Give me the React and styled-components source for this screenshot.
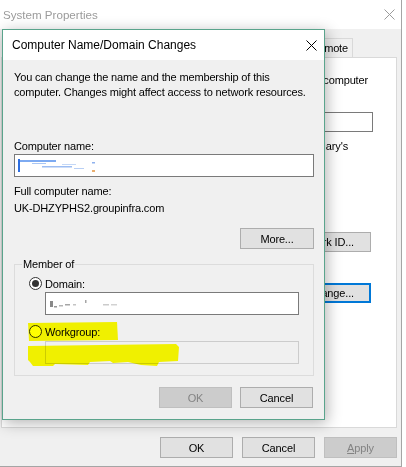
import React from 'react';
import styled, { createGlobalStyle, css } from 'styled-components';

const GlobalStyle = createGlobalStyle`
  html, body {
    margin: 0;
    background: #ffffff;
  }
  body {
    font-family: "Liberation Sans", Arial, sans-serif;
    font-size: 11px;
    letter-spacing: -0.15px;
    color: #000;
  }
  * { box-sizing: border-box; }
`;

const Desktop = styled.div`
  position: relative;
  width: 406px;
  height: 467px;
  overflow: hidden;
  background: #ffffff;
`;

/* ---------- System Properties (inactive, behind) ---------- */

const OuterWindow = styled.div`
  width: 402px;
  height: 467px;
  display: flex;
  flex-direction: column;
  background: #f0f0f0;
  border-right: 1px solid #a5a5a5;
  border-bottom: 1px solid #a5a5a5;
`;

const OuterTitleBar = styled.div`
  height: 29px;
  flex: none;
  display: flex;
  align-items: center;
  justify-content: space-between;
  padding: 0 6px 0 3px;
  background: #ffffff;
  color: #9b9b9b;
  font-size: 11.6px;
  letter-spacing: 0;
`;

const TabStrip = styled.div`
  height: 19px;
  margin-top: 9px;
  flex: none;
  display: flex;
  justify-content: flex-end;
  padding-right: 48px;
`;

const Tab = styled.div`
  height: 19px;
  display: flex;
  align-items: center;
  padding: 0 4px 0 8px;
  background: #f0f0f0;
  border: 1px solid #d9d9d9;
  border-bottom: none;
`;

const TabPanel = styled.div`
  height: 371px;
  flex: none;
  margin: 0 4px 0 1px;
  background: #ffffff;
  border: 1px solid #d9d9d9;
  display: flex;
  flex-direction: column;
  align-items: flex-end;
`;

const PanelText = styled.div`
  line-height: 15px;
  white-space: nowrap;
  margin-top: ${({ $top }) => $top}px;
  margin-right: ${({ $inset }) => $inset}px;
`;

const PanelInput = styled.div`
  width: 220px;
  height: 20px;
  margin-top: 24px;
  margin-right: 23px;
  background: #fff;
  border: 1px solid #7a7a7a;
`;

const WinButton = styled.button`
  width: ${({ $w }) => $w || 73}px;
  height: ${({ $h }) => $h || 21}px;
  padding: 0;
  font: inherit;
  letter-spacing: inherit;
  color: #000;
  background: #e1e1e1;
  border: 1px solid #adadad;
  flex: none;
  ${({ disabled }) =>
    disabled &&
    css`
      background: #cccccc;
      border-color: #bfbfbf;
      color: #838383;
    `}
  ${({ $focus }) =>
    $focus &&
    css`
      border: 2px solid #0078d7;
    `}
`;

const PanelButton = styled(WinButton)`
  margin-top: ${({ $top }) => $top}px;
  margin-right: 25px;
  text-align: right;
  padding-right: ${({ $focus }) => ($focus ? 15 : 16)}px;
`;

const OuterButtons = styled.div`
  margin-top: 9px;
  padding-right: 4px;
  display: flex;
  justify-content: flex-end;
  gap: 9px;
`;

/* ---------- Computer Name/Domain Changes (active dialog) ---------- */

const Dialog = styled.div`
  position: absolute;
  left: 2px;
  top: 29px;
  width: 323px;
  height: 391px;
  display: flex;
  flex-direction: column;
  background: #f0f0f0;
  border: 1px solid #5aa48c;
  box-shadow: 2px 3px 14px rgba(0, 0, 0, 0.3);
`;

const DialogTitleBar = styled.div`
  height: 30px;
  flex: none;
  display: flex;
  align-items: center;
  justify-content: space-between;
  padding: 0 7px 0 9px;
  background: #ffffff;
  font-size: 12px;
  letter-spacing: 0;
`;

const DialogBody = styled.div`
  display: flex;
  flex-direction: column;
  padding: 10px 10px 0 11px;
`;

const Text = styled.div`
  line-height: ${({ $lh }) => $lh || 15}px;
  margin-top: ${({ $top }) => $top || 0}px;
  white-space: nowrap;
`;

const Field = styled.div`
  height: 23px;
  flex: none;
  display: flex;
  align-items: center;
  padding-left: 3px;
  margin-top: ${({ $top }) => $top || 0}px;
  margin-left: ${({ $left }) => $left || 0}px;
  width: ${({ $w }) => $w}px;
  background: ${({ $disabled }) => ($disabled ? '#f0f0f0' : '#ffffff')};
  border: 1px solid ${({ $disabled }) => ($disabled ? '#cccccc' : '#7a7a7a')};
`;

const MoreButton = styled(WinButton)`
  align-self: flex-end;
  margin-top: 11px;
  margin-right: 0;
`;

const GroupBox = styled.fieldset`
  margin: 8px 0 0 0;
  padding: 0 13px 11px 14px;
  min-width: 0;
  border: 1px solid #dcdcdc;
  display: flex;
  flex-direction: column;
`;

const GroupLabel = styled.legend`
  line-height: 14px;
  padding: 0 1px;
  margin-left: -7px;
`;

const RadioRow = styled.label`
  height: 15px;
  display: flex;
  align-items: center;
  gap: 3px;
  margin-top: ${({ $top }) => $top}px;
`;

const Radio = styled.span`
  width: 13px;
  height: 13px;
  border-radius: 50%;
  border: 1px solid #333;
  background: #fff;
  display: flex;
  align-items: center;
  justify-content: center;
  &::after {
    content: '';
    width: 7px;
    height: 7px;
    border-radius: 50%;
    background: ${({ $checked }) => ($checked ? '#333' : 'transparent')};
  }
`;

const DialogButtons = styled.div`
  margin-top: 11px;
  margin-right: 1px;
  display: flex;
  justify-content: flex-end;
  gap: 8px;
`;

const Marker = styled.svg`
  position: absolute;
  left: 0;
  top: 0;
  mix-blend-mode: multiply;
  pointer-events: none;
`;

const CloseIcon = ({ size, color }) => (
  <svg width={size} height={size} viewBox={`0 0 ${size} ${size}`}>
    <path d={`M0.5 0.5 L${size - 0.5} ${size - 0.5} M${size - 0.5} 0.5 L0.5 ${size - 0.5}`} stroke={color} strokeWidth="1" />
  </svg>
);

// smudged-out entries in the two text fields
const NameSmudge = () => (
  <svg width="78" height="14" viewBox="0 0 78 14">
    <defs>
      <filter id="soft"><feGaussianBlur stdDeviation="0.5" /></filter>
    </defs>
    <g filter="url(#soft)">
      <rect x="0" y="0" width="2" height="13" fill="#2d6ee0" />
      <rect x="2" y="1" width="36" height="2" fill="#5d95ee" opacity="0.8" />
      <rect x="14" y="4" width="14" height="1" fill="#a9c6f4" />
      <rect x="24" y="7" width="30" height="1.5" fill="#9dbdf2" />
      <rect x="44" y="5" width="14" height="1" fill="#c4d8f7" />
      <rect x="56" y="9" width="10" height="1" fill="#b8cff5" />
      <rect x="74" y="3" width="3" height="1.5" fill="#8fb2ee" />
      <rect x="74" y="11" width="3" height="2" fill="#e59a4a" opacity="0.8" />
    </g>
  </svg>
);

const DomainSmudge = () => (
  <svg width="72" height="12" viewBox="0 0 72 12">
    <g fill="#6b6b6b">
      <rect x="1" y="3" width="3" height="6" opacity="0.8" />
      <rect x="5" y="8" width="3" height="1.5" opacity="0.7" />
      <rect x="10" y="7" width="4" height="1.5" opacity="0.5" />
      <rect x="16" y="6" width="5" height="1.5" opacity="0.6" />
      <rect x="24" y="6" width="3" height="1.5" opacity="0.4" />
      <rect x="36" y="2" width="1.5" height="3" opacity="0.6" />
      <rect x="54" y="6" width="6" height="1.5" opacity="0.35" />
      <rect x="62" y="6" width="6" height="1.5" opacity="0.3" />
    </g>
  </svg>
);

export default function App() {
  return (
    <>
      <GlobalStyle />
      <Desktop>
        <OuterWindow>
          <OuterTitleBar>
            <span>System Properties</span>
            <CloseIcon size={11} color="#9b9b9b" />
          </OuterTitleBar>
          <TabStrip>
            <Tab>Remote</Tab>
          </TabStrip>
          <TabPanel>
            <PanelText $top={15} $inset={28}>
              Windows uses the following information to identify your computer
            </PanelText>
            <PanelInput />
            <PanelText $top={7} $inset={48}>
              For example: &quot;Kitchen Computer&quot; or &quot;Mary&apos;s
            </PanelText>
            <PanelButton $w={120} $h={20} $top={78}>
              Network ID...
            </PanelButton>
            <PanelButton $w={120} $h={20} $top={31} $focus>
              Change...
            </PanelButton>
          </TabPanel>
          <OuterButtons>
            <WinButton>OK</WinButton>
            <WinButton>Cancel</WinButton>
            <WinButton disabled>
              <u>A</u>pply
            </WinButton>
          </OuterButtons>
        </OuterWindow>

        <Dialog>
          <DialogTitleBar>
            <span>Computer Name/Domain Changes</span>
            <CloseIcon size={11} color="#000" />
          </DialogTitleBar>
          <DialogBody>
            <Text>
              You can change the name and the membership of this
              <br />
              computer. Changes might affect access to network resources.
            </Text>
            <Text $top={39}>Computer name:</Text>
            <Field $w={300}>
              <NameSmudge />
            </Field>
            <Text $lh={17} $top={6}>Full computer name:</Text>
            <Text $lh={17}>UK-DHZYPHS2.groupinfra.com</Text>
            <MoreButton $w={74}>More...</MoreButton>
            <GroupBox>
              <GroupLabel>Member of</GroupLabel>
              <RadioRow $top={5}>
                <Radio $checked />
                Domain:
              </RadioRow>
              <Field $w={254} $left={16} $top={1}>
                <DomainSmudge />
              </Field>
              <RadioRow $top={9}>
                <Radio />
                Workgroup:
              </RadioRow>
              <Field $w={254} $left={16} $top={2} $disabled />
            </GroupBox>
            <DialogButtons>
              <WinButton disabled>OK</WinButton>
              <WinButton>Cancel</WinButton>
            </DialogButtons>
          </DialogBody>
        </Dialog>

        {/* highlighter strokes */}
        <Marker width="406" height="467" viewBox="0 0 406 467">
          <path d="M28 323 L117 322 L118 340 L29 341 Z" fill="#ffff00" />
          <path d="M28 346 L176 344 L179 347 L178 361 L159 362 L157 366 L141 365 L128 362 L113 363 L110 361 L90 362 L88 365 L55 364 L53 366 L33 366 L30 362 L28 360 Z" fill="#ffff00" />
        </Marker>
      </Desktop>
    </>
  );
}
